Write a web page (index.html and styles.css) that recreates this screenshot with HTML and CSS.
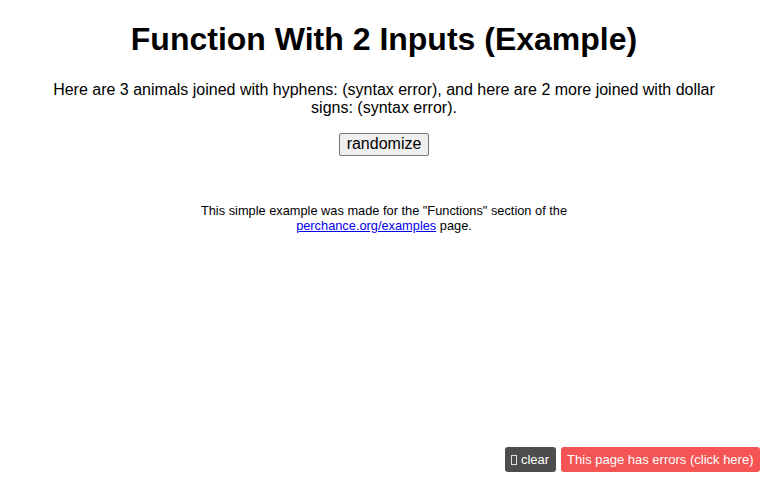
FILE: index.html
```html
<!DOCTYPE html>
<html>
<head>
<meta charset="utf-8">
<link rel="stylesheet" href="styles.css">
</head>
<body>
<h1 class="title">Function With 2 Inputs (Example)</h1>
<p class="output">Here are 3 animals joined with hyphens: (syntax error), and here are 2 more joined with dollar signs: (syntax error).</p>
<button class="randomize">randomize</button>
<p class="note">This simple example was made for the "Functions" section of the <a href="#">perchance.org/examples</a> page.</p>
<div class="error-bar">
  <button class="clear-btn"><span class="tofu"></span> clear</button>
  <button class="error-btn">This page has errors (click here)</button>
</div>
</body>
</html>
```
FILE: styles.css
```css
body {
  margin: 8px;
  font-family: "Liberation Sans", Arial, sans-serif;
  text-align: center;
  color: #000;
  background: #fff;
}
.title {
  font-size: 32px;
  font-weight: bold;
  margin: 12.5px 0 23px;
}
.output {
  font-size: 16px;
  max-width: 680px;
  margin: 16px auto 16px;
}
.randomize {
  font-family: "Liberation Sans", Arial, sans-serif;
  font-size: 16px;
  padding: 1.5px 7px;
  background: #efefef;
  border: 1px solid #767676;
  border-radius: 2px;
  color: #000;
}
.note {
  font-size: 12.8px;
  line-height: 15px;
  max-width: 400px;
  margin: 47px auto 0;
}
.note a {
  color: #0000ee;
}
.error-bar {
  position: fixed;
  right: 8px;
  bottom: 8px;
  display: flex;
  gap: 5px;
}
.error-bar button {
  font-family: "Liberation Sans", Arial, sans-serif;
  font-size: 13px;
  line-height: 15px;
  color: #fff;
  border: none;
  border-radius: 3px;
  padding: 5px 6.5px;
}
.clear-btn {
  background: #4d4d4d;
  padding-left: 8px;
}
.error-btn {
  background: #f55454;
}
.tofu {
  display: inline-block;
  width: 4px;
  height: 8px;
  border: 1px solid #e0e0e0;
  vertical-align: -1px;
}
```
